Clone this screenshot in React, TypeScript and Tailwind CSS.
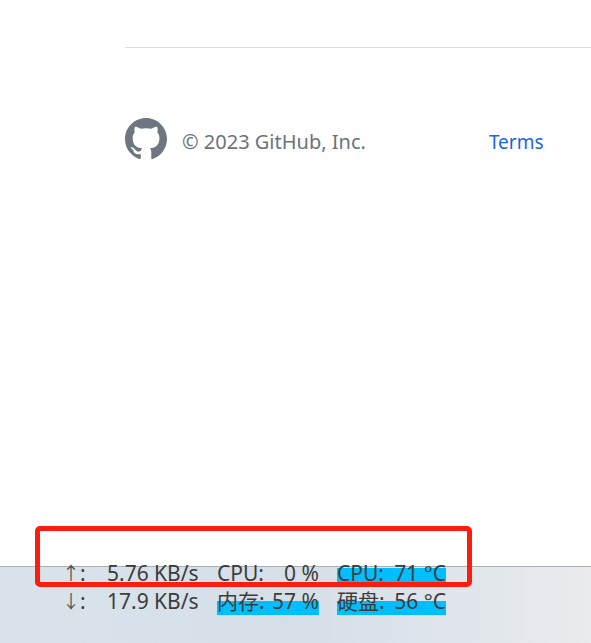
const FONT = "font-['Noto_Sans','Noto_Sans_CJK_SC',sans-serif]"

function GithubMark() {
  return (
    <svg viewBox="0 0 16 16" className="w-[42px] h-[42px] shrink-0" fill="#6e7781">
      <path d="M8 0C3.58 0 0 3.58 0 8c0 3.54 2.29 6.53 5.47 7.59.4.07.55-.17.55-.38 0-.19-.01-.82-.01-1.49-2.01.37-2.53-.49-2.69-.94-.09-.23-.48-.94-.82-1.13-.28-.15-.68-.52-.01-.53.63-.01 1.08.58 1.23.82.72 1.21 1.87.87 2.33.66.07-.52.28-.87.51-1.07-1.78-.2-3.64-.89-3.64-3.95 0-.87.31-1.59.82-2.15-.08-.2-.36-1.02.08-2.12 0 0 .67-.21 2.2.82.64-.18 1.32-.27 2-.27.68 0 1.36.09 2 .27 1.53-1.04 2.2-.82 2.2-.82.44 1.1.16 1.92.08 2.12.51.56.82 1.27.82 2.15 0 3.07-1.87 3.75-3.65 3.95.29.25.54.73.54 1.48 0 1.07-.01 1.93-.01 2.2 0 .21.15.46.55.38A8.013 8.013 0 0016 8c0-4.42-3.58-8-8-8z" />
    </svg>
  )
}

function Cell({ label, value, width, bar }: { label: string; value: string; width: string; bar?: string }) {
  return (
    <div className={`relative flex justify-between ${width}`}>
      {bar && <div className={`absolute left-0 right-0 bottom-0 bg-[#00bfff] ${bar}`} />}
      <span className="relative whitespace-pre">{label}</span>
      <span className="relative whitespace-pre">{value}</span>
    </div>
  )
}

function Arrow({ glyph }: { glyph: string }) {
  return (
    <span className="w-[42px] flex">
      <span className="-ml-[3px] text-[18px] text-[#555555]">{glyph}</span>
      <span>:</span>
    </span>
  )
}

export default function App() {
  return (
    <div className={`relative w-[591px] h-[643px] overflow-hidden bg-white flex flex-col ${FONT}`}>
      <div className="h-[566px] shrink-0 pl-[125px] pt-[47px]">
        <div className="h-px bg-[#dcdee0]" />
        <div className="mt-[70px] flex items-center h-[42px]">
          <GithubMark />
          <span className="ml-[15px] pt-[6px] text-[20px] text-[#6a737c]">© 2023 GitHub, Inc.</span>
          <a className="ml-[123px] pt-[6px] text-[19px] text-[#1a66e0]">Terms</a>
        </div>
      </div>

      <div className="flex-1 border-t border-[#adb0b3] bg-gradient-to-r from-[#d9e3ea] via-[#d5dfe8] to-[#e9ebee] pl-[65px] text-[21px] leading-[28px] text-[#3c3c3c]">
        <div className="-mt-[8px] flex">
          <Arrow glyph="↑" />
          <span className="w-[110px] whitespace-pre">5.76 KB/s</span>
          <Cell label="CPU:" value="0 %" width="w-[102px]" />
          <div className="w-[18px]" />
          <Cell label="CPU:" value="71 °C" width="w-[109px]" bar="h-[19px]" />
        </div>
        <div className="flex">
          <Arrow glyph="↓" />
          <span className="w-[110px] whitespace-pre">17.9 KB/s</span>
          <Cell label="内存:" value="57 %" width="w-[102px]" bar="h-[14px]" />
          <div className="w-[18px]" />
          <Cell label="硬盘:" value="56 °C" width="w-[109px]" bar="h-[14px]" />
        </div>
      </div>

      {/* red annotation box drawn over the screenshot */}
      <div className="absolute left-[35px] top-[526px] w-[437px] h-[61px] border-[5px] border-[#fb1d10] rounded-[5px]" />
    </div>
  )
}
